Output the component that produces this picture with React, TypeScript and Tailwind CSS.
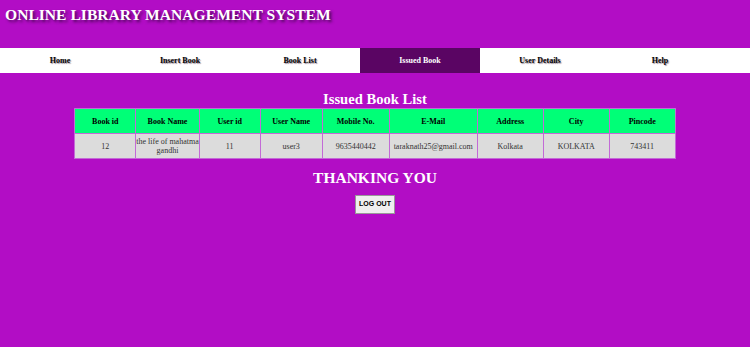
import React from "react";

const navItems = ["Home", "Insert Book", "Book List", "Issued Book", "User Details", "Help"];

const columns = [
  { label: "Book id", w: "w-[61px]" },
  { label: "Book Name", w: "w-[62px]" },
  { label: "User id", w: "w-[61px]" },
  { label: "User Name", w: "w-[62px]" },
  { label: "Mobile No.", w: "w-[67px]" },
  { label: "E-Mail", w: "w-[88px]" },
  { label: "Address", w: "w-[66px]" },
  { label: "City", w: "w-[66px]" },
  { label: "Pincode", w: "w-[66px]" },
];

const row: React.ReactNode[] = [
  "12",
  <>
    the life of mahatma
    <br />
    gandhi
  </>,
  "11",
  "user3",
  "9635440442",
  "taraknath25@gmail.com",
  "Kolkata",
  "KOLKATA",
  "743411",
];

export default function App() {
  return (
    <div className="min-h-[347px] w-full bg-[#b20dc5] font-['Liberation_Serif',serif]">
      <h1 className="px-[5px] pt-[5px] text-[15.6px] font-bold leading-[20px] text-white [text-shadow:2px_2px_3px_#4a0856]">
        ONLINE LIBRARY MANAGEMENT SYSTEM
      </h1>

      <nav className="mt-[23px] flex h-[25px] bg-white">
        {navItems.map((item) => (
          <div
            key={item}
            className={
              "flex w-[120px] items-center justify-center text-[8px] font-bold " +
              (item === "Issued Book"
                ? "bg-[#5a0563] text-white"
                : "text-black [text-shadow:1px_1px_1px_#9a8a9a]")
            }
          >
            {item}
          </div>
        ))}
      </nav>

      <h2 className="mt-[17px] text-center text-[14.6px] font-bold leading-[18px] text-white">
        Issued Book List
      </h2>

      <table className="mx-auto table-fixed border-collapse text-[8px] leading-[9px]">
        <thead>
          <tr className="h-[25px] bg-[#00ff77]">
            {columns.map((c) => (
              <th key={c.label} className={"border border-[#c36ad6] font-bold text-black " + c.w}>
                {c.label}
              </th>
            ))}
          </tr>
        </thead>
        <tbody>
          <tr className="h-[25px] bg-[#dcdcdc]">
            {row.map((v, i) => (
              <td key={i} className="whitespace-nowrap border border-[#c36ad6] text-center text-[#333]">
                {v}
              </td>
            ))}
          </tr>
        </tbody>
      </table>

      <h2 className="mt-[9px] text-center text-[15.5px] font-bold leading-[20px] text-white">
        THANKING YOU
      </h2>

      <div className="mt-[7px] flex justify-center">
        <button className="h-[19px] w-[40px] border border-[#999] bg-[#efefef] font-['Liberation_Sans',sans-serif] text-[7px] font-bold text-black">
          LOG OUT
        </button>
      </div>
    </div>
  );
}
